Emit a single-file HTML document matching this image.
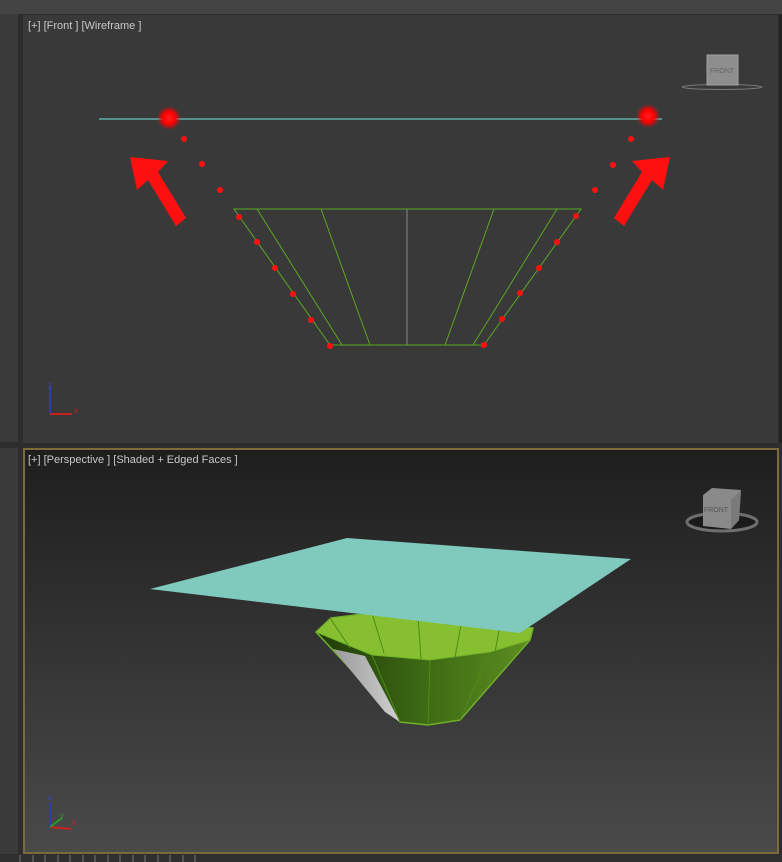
<!DOCTYPE html>
<html><head><meta charset="utf-8"><style>
html,body{margin:0;padding:0;background:#2d2d2d;}
body{width:782px;height:862px;overflow:hidden;position:relative;font-family:"Liberation Sans",sans-serif;}
.lbl{position:absolute;color:#c8c8c8;font-size:11px;}
</style></head><body>
<svg width="782" height="862" style="position:absolute;left:0;top:0">
<defs>
<linearGradient id="bg2" x1="0" y1="0" x2="0" y2="1"><stop offset="0" stop-color="#1e1e1e"/><stop offset="1" stop-color="#4a4a4a"/></linearGradient>
<radialGradient id="glow"><stop offset="0" stop-color="#ff2020"/><stop offset="0.5" stop-color="#ff0000"/><stop offset="1" stop-color="#ff0000" stop-opacity="0"/></radialGradient>
<linearGradient id="dk" x1="0" y1="0" x2="1" y2="0"><stop offset="0" stop-color="#1f3a08"/><stop offset="0.5" stop-color="#3d6a14"/><stop offset="1" stop-color="#5d8e20"/></linearGradient>
<linearGradient id="gr" x1="0" y1="0" x2="1" y2="0"><stop offset="0" stop-color="#9a9a9a"/><stop offset="1" stop-color="#d0d0d0"/></linearGradient>
</defs>
<rect x="0" y="0" width="782" height="14" fill="#444"/>
<rect x="0" y="14" width="18" height="428" fill="#3a3a3a"/>
<rect x="0" y="448" width="18" height="406" fill="#3a3a3a"/>
<rect x="23" y="15" width="755" height="428" fill="#393939"/>
<rect x="779" y="15" width="3" height="428" fill="#222"/>
<rect x="24" y="449" width="754" height="404" fill="url(#bg2)" stroke="#7d6a3a" stroke-width="2"/>
<rect x="0" y="855" width="782" height="7" fill="#303030"/>
<g stroke="#777" stroke-width="1">
<path d="M20 855v7M33 855v7M45 855v7M58 855v7M70 855v7M83 855v7M95 855v7M108 855v7M120 855v7M133 855v7M145 855v7M158 855v7M170 855v7M183 855v7M195 855v7"/>
</g>
<line x1="99" y1="119" x2="662" y2="119" stroke="#5fb0a8" stroke-width="1.5"/>
<g stroke="#5aa822" stroke-width="1" fill="none">
<path d="M234 209H581L484 345H330Z"/>
<path d="M257 209L342 345M321 209L370 345M494 209L445 345M557 209L473 345"/>
</g>
<line x1="407" y1="209" x2="407" y2="345" stroke="#888" stroke-width="1"/>
<circle cx="169" cy="118" r="12" fill="url(#glow)"/>
<circle cx="648" cy="116" r="12" fill="url(#glow)"/>
<g fill="#ff1010">
<circle cx="184" cy="139" r="3"/><circle cx="202" cy="164" r="3"/><circle cx="220" cy="190" r="3"/>
<circle cx="631" cy="139" r="3"/><circle cx="613" cy="165" r="3"/><circle cx="595" cy="190" r="3"/>
<circle cx="239" cy="217" r="3"/><circle cx="257" cy="242" r="3"/><circle cx="275" cy="268" r="3"/><circle cx="293" cy="294" r="3"/><circle cx="311" cy="320" r="3"/><circle cx="330" cy="346" r="3"/>
<circle cx="576" cy="216" r="3"/><circle cx="557" cy="242" r="3"/><circle cx="539" cy="268" r="3"/><circle cx="520" cy="293" r="3"/><circle cx="502" cy="319" r="3"/><circle cx="484" cy="345" r="3"/>
<path d="M130 157L168 161L158 172L186 218L176 226L148 180L137 190Z"/>
<path d="M670 157L632 161L642 172L614 218L624 226L652 180L663 190Z"/>
</g>
<g><line x1="50" y1="414" x2="50" y2="387" stroke="#2b3bbb" stroke-width="2"/><line x1="50" y1="414" x2="72" y2="414" stroke="#cc2020" stroke-width="2"/><text x="48" y="388" font-size="8" fill="#3344cc" font-family="Liberation Sans">z</text><text x="74" y="413" font-size="8" fill="#cc2020" font-family="Liberation Sans">x</text></g>
<ellipse cx="722" cy="87" rx="40" ry="2.5" fill="none" stroke="#777" stroke-width="1"/>
<rect x="707" y="55" width="31" height="30" fill="#8e8e8e" stroke="#a0a0a0"/>
<text x="722" y="73" font-size="7" fill="#666" text-anchor="middle" font-family="Liberation Sans">FRONT</text>
<ellipse cx="722" cy="522" rx="35" ry="9" fill="#1a1a1a" stroke="#6e6e6e" stroke-width="3"/>
<path d="M703 495L712 488L741 490L739 520L731 529L703 526Z" fill="#8a8a8a"/>
<path d="M731 500L741 490L739 520L731 529Z" fill="#7a7a7a"/>
<text x="716" y="512" font-size="7" fill="#555" text-anchor="middle" font-family="Liberation Sans">FRONT</text>
<path d="M316 632L331 618L372 613L430 616L490 624L533 628L530 640L460 720L428 725L400 722Z" fill="url(#dk)" stroke="#6fb02a" stroke-width="1.5"/>
<path d="M333 649L365 656L400 722L385 712Z" fill="url(#gr)"/>
<path d="M316 632L331 618L372 613L430 616L490 624L533 628L530 640L490 652L430 660L372 655Z" fill="#86c030" stroke="#6fb02a" stroke-width="1"/>
<g stroke="#4f8a18" stroke-width="1" fill="none">
<path d="M372 613L384 653M330 618L350 648M418 616L421 659M462 620L455 657M500 625L495 652"/>
<path d="M372 655L400 722M430 660L428 725M490 652L460 720"/>
</g>
<path d="M150 589L347 538L631 559L520 633Z" fill="#7fcabd"/>
<g><line x1="50" y1="827" x2="50" y2="802" stroke="#2b3bbb" stroke-width="2"/><line x1="50" y1="827" x2="71" y2="829" stroke="#cc2020" stroke-width="2"/><line x1="50" y1="827" x2="62" y2="818" stroke="#2a9a2a" stroke-width="2"/><text x="48" y="800" font-size="8" fill="#3344cc" font-family="Liberation Sans">z</text><text x="72" y="825" font-size="8" fill="#cc2020" font-family="Liberation Sans">x</text><text x="60" y="818" font-size="8" fill="#2a9a2a" font-family="Liberation Sans">y</text></g>
</svg>
<div class="lbl" style="left:28px;top:20px">[+] [Front ] [Wireframe ]</div>
<div class="lbl" style="left:28px;top:454px">[+] [Perspective ] [Shaded + Edged Faces ]</div>
</body></html>
